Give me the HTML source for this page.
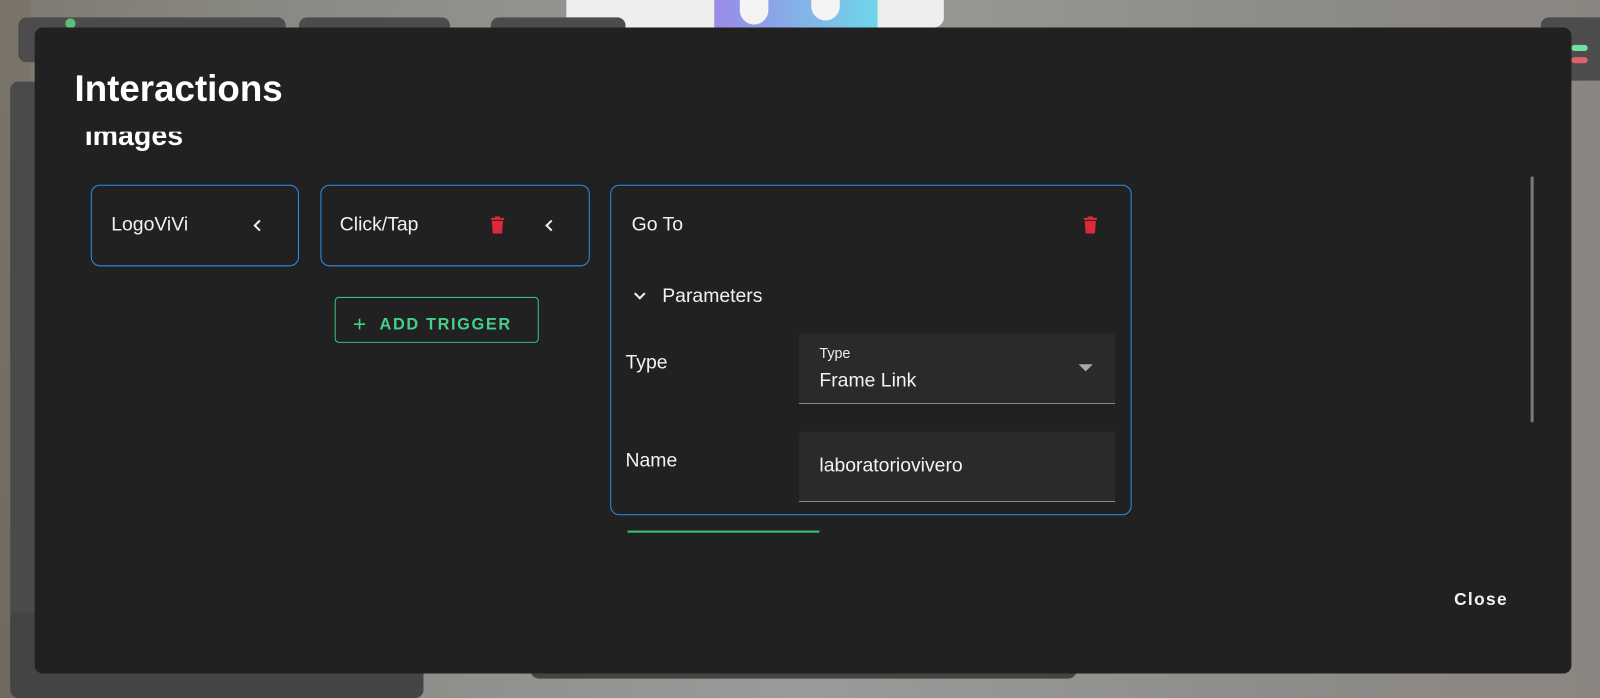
<!DOCTYPE html>
<html><head><meta charset="utf-8"><style>
*{box-sizing:border-box;margin:0;padding:0}
body{width:1600px;height:684px;overflow:hidden;position:relative;font-family:"Liberation Sans",sans-serif;
background:linear-gradient(90deg,#7d7a70 0%,#8b8b86 20%,#9a9b98 50%,#8d8c88 80%,#8a8580 100%);}
#w{position:absolute;left:0;top:0;width:1568px;height:670px;transform:scale(1.0204);transform-origin:0 0}
.a{position:absolute}
.modal{left:34px;top:27px;width:1506px;height:633px;background:#212121;border-radius:8px}
.t{color:#fff}
.card{position:absolute;border:1px solid #2a8ee8;border-radius:9px}
.lbl{position:absolute;font-size:19px;color:#f2f2f2;line-height:1}
.chev{position:absolute;width:8px;height:8px;border-left:2.5px solid #eee;border-bottom:2.5px solid #eee;transform:rotate(45deg)}
.trash{position:absolute;width:13px;height:17px}
.field{position:absolute;background:#2a2a2a;border-radius:4px 4px 0 0;border-bottom:1px solid #8a8a8a}
</style></head><body><div id="w">
<div class="a" style="left:0;top:0;width:30px;height:684px;background:linear-gradient(#7a7568,#6e6a60)"></div>
<div class="a" style="left:555px;top:0;width:370px;height:27px;background:#eeeeee;border-radius:0 0 10px 10px"></div>
<div class="a" style="left:700px;top:0;width:160px;height:27px;background:linear-gradient(90deg,#9a8ae8,#6fd6e8)"></div>
<div class="a" style="left:725px;top:0;width:28px;height:24px;background:#f4f4f4;border-radius:0 0 14px 14px"></div>
<div class="a" style="left:795px;top:0;width:28px;height:20px;background:#f4f4f4;border-radius:0 0 14px 14px"></div>
<div class="a" style="left:18px;top:17px;width:262px;height:44px;background:#4c4c4c;border-radius:8px"></div>
<div class="a" style="left:64px;top:18px;width:10px;height:10px;background:#5fbf7a;border-radius:5px"></div>
<div class="a" style="left:293px;top:17px;width:148px;height:20px;background:#4c4c4c;border-radius:8px"></div>
<div class="a" style="left:481px;top:17px;width:132px;height:20px;background:#4c4c4c;border-radius:8px"></div>
<div class="a" style="left:10px;top:80px;width:30px;height:590px;background:#4a4a4a;border-radius:8px"></div>
<div class="a" style="left:10px;top:600px;width:405px;height:84px;background:#444;border-radius:8px"></div>
<div class="a" style="left:520px;top:620px;width:535px;height:45px;background:#444;border-radius:8px"></div>
<div class="a" style="left:1510px;top:17px;width:90px;height:62px;background:#4c4c4c;border-radius:8px"></div>
<div class="a" style="left:1540px;top:44px;width:16px;height:6px;background:#6fe0a0;border-radius:3px"></div>
<div class="a" style="left:1540px;top:56px;width:16px;height:6px;background:#e06070;border-radius:3px"></div>

<div class="a modal"></div>
<div class="a t" style="left:83px;top:129px;width:200px;height:22px;overflow:hidden"><div style="position:absolute;top:-12px;font-size:28px;font-weight:bold">Images</div></div>
<div class="a t" style="left:73px;top:66px;font-size:36px;font-weight:bold">Interactions</div>

<div class="card" style="left:89px;top:181px;width:204px;height:80px"></div>
<div class="lbl" style="left:109px;top:211px">LogoViVi</div>
<div class="chev" style="left:250px;top:217px"></div>

<div class="card" style="left:314px;top:181px;width:264px;height:80px"></div>
<div class="lbl" style="left:333px;top:211px">Click/Tap</div>
<svg class="trash" style="left:481px;top:212px" viewBox="0 0 13 17"><rect x="0" y="1.5" width="13" height="2" fill="#e0283c"/><rect x="4" y="0" width="5" height="2" fill="#e0283c"/><path d="M1 4.5h11l-1 12.5H2z" fill="#e0283c"/></svg>
<div class="chev" style="left:536px;top:217px"></div>

<div class="a" style="left:328px;top:291px;width:200px;height:45px;border:1px solid #3fbf78;border-radius:4px"></div>
<div class="a" style="left:346px;top:303px;font-size:16px;font-weight:bold;letter-spacing:1.6px;color:#45d08a"><span style="font-weight:normal;font-size:22px;position:relative;top:2px">+</span>&nbsp; ADD TRIGGER</div>

<div class="card" style="left:598px;top:181px;width:511px;height:324px"></div>
<div class="lbl" style="left:619px;top:211px">Go To</div>
<svg class="trash" style="left:1062px;top:212px" viewBox="0 0 13 17"><rect x="0" y="1.5" width="13" height="2" fill="#e0283c"/><rect x="4" y="0" width="5" height="2" fill="#e0283c"/><path d="M1 4.5h11l-1 12.5H2z" fill="#e0283c"/></svg>
<div class="chev" style="left:623px;top:284px;transform:rotate(-45deg)"></div>
<div class="lbl" style="left:649px;top:281px">Parameters</div>
<div class="lbl" style="left:613px;top:346px">Type</div>
<div class="field" style="left:783px;top:327px;width:310px;height:69px"></div>
<div class="a" style="left:803px;top:338px;font-size:14px;color:#eee">Type</div>
<div class="lbl" style="left:803px;top:364px">Frame Link</div>
<div class="a" style="left:1057px;top:357px;width:0;height:0;border-left:7px solid transparent;border-right:7px solid transparent;border-top:7px solid #aaa"></div>
<div class="lbl" style="left:613px;top:442px">Name</div>
<div class="field" style="left:783px;top:423px;width:310px;height:69px"></div>
<div class="lbl" style="left:803px;top:447px">laboratoriovivero</div>

<div class="a" style="left:615px;top:520px;width:188px;height:2px;background:#3fbf78"></div>
<div class="a" style="left:1500px;top:173px;width:3px;height:241px;background:#7a7a7a;border-radius:2px"></div>
<div class="a" style="left:1425px;top:578px;font-size:17px;font-weight:bold;letter-spacing:1.3px;color:#f2f2f2">Close</div>
</div></body></html>
